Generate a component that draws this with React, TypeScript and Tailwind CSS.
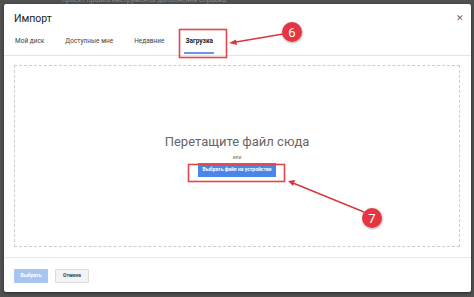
import React from "react";

export default function App() {
  return (
    <div
      className="relative w-[474px] h-[297px] bg-[#505050] pt-[4px] pl-[4px] pr-[3px] pb-[5px] overflow-hidden"
      style={{ fontFamily: "Roboto, 'Noto Sans', sans-serif" }}
    >
      <div className="absolute left-[62px] top-[-3px] text-[7px] leading-[7px] text-[#8a8a8a] whitespace-nowrap">
        проект   правка   инструменты   дополнения   справка
      </div>
      <div className="relative z-10 flex flex-col h-full bg-white rounded-[2px] shadow-[0_1px_3px_rgba(0,0,0,0.5)]">
        {/* header */}
        <div className="flex items-center justify-between h-[28px] pl-[10px] pr-[7px] pt-[1px]">
          <span className="text-[10.5px] text-[#222]">Импорт</span>
          <span className="text-[9px] text-[#666] leading-none">✕</span>
        </div>
        {/* tabs */}
        <div className="flex items-end h-[24px] border-b border-[#e4e4e4] pl-[11px] text-[6.5px] text-[#444]">
          <div className="h-full flex items-center mr-[21px] pb-[3px]">Мой диск</div>
          <div className="h-full flex items-center mr-[21px] pb-[3px]">Доступные мне</div>
          <div className="h-full flex items-center mr-[21px] pb-[3px]">Недавние</div>
          <div className="relative h-full flex items-center pb-[3px] font-bold text-[#222]">
            Загрузка
            <div className="absolute left-[-1px] right-[-1px] bottom-[1px] h-[2px] bg-[#6d97e6]" />
          </div>
        </div>
        {/* drop zone */}
        <div className="flex-1 pt-[9px] pl-[10px] pr-[11px] pb-[10px]">
          <div className="h-full border-[1.5px] border-dashed border-[#cdcdcd] flex flex-col items-center pt-[68px]">
            <div className="text-[13px] text-[#666] leading-[16px]">Перетащите файл сюда</div>
            <div className="text-[5px] text-[#666] mt-[4px] leading-[6px]">или</div>
            <div className="mt-[3px] bg-[#4a86e8] text-white text-[5px] font-bold px-[5px] h-[14px] flex items-center">
              Выбрать файл на устройстве
            </div>
          </div>
        </div>
        {/* footer */}
        <div className="h-[35px] border-t border-[#e8e8e8] flex items-start pt-[11px] pl-[10px] gap-[7px]">
          <div className="w-[34px] h-[14px] bg-[#a7c4f2] rounded-[1px] text-white text-[5px] font-bold flex items-center justify-center">
            Выбрать
          </div>
          <div className="w-[34px] h-[14px] bg-[#f3f3f3] border border-[#dcdcdc] rounded-[1px] text-[#444] text-[5px] font-bold flex items-center justify-center">
            Отмена
          </div>
        </div>
      </div>

      {/* annotations */}
      <svg className="absolute left-0 top-0 z-20" width="474" height="297">
        <defs>
          <filter id="sh" x="-50%" y="-50%" width="200%" height="200%">
            <feDropShadow dx="0.5" dy="1" stdDeviation="1" floodColor="#000" floodOpacity="0.35" />
          </filter>
        </defs>
        <rect x="179.5" y="29.5" width="47" height="28" fill="none" stroke="#e0474c" strokeWidth="1.6" />
        <rect x="188.5" y="164.5" width="96" height="17" fill="none" stroke="#e0474c" strokeWidth="1.6" />
        <line x1="283" y1="34" x2="233" y2="42.5" stroke="#d9363e" strokeWidth="1.4" />
        <polygon points="229,43 236,39.5 237,45" fill="#d9363e" />
        <line x1="364" y1="212" x2="293" y2="183" stroke="#d9363e" strokeWidth="1.4" />
        <polygon points="288,181 295,180 293,186" fill="#d9363e" />
        <g filter="url(#sh)">
          <circle cx="292" cy="32" r="10" fill="#e53640" />
          <circle cx="372" cy="218" r="10" fill="#e53640" />
        </g>
        <text x="292" y="36.5" textAnchor="middle" fontSize="13" fill="#fff" fontFamily="Roboto, sans-serif">6</text>
        <text x="372" y="222.5" textAnchor="middle" fontSize="13" fill="#fff" fontFamily="Roboto, sans-serif">7</text>
      </svg>
    </div>
  );
}
